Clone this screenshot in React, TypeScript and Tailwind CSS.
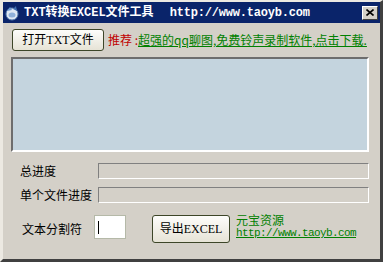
import React from "react";

const cjk = { fontFamily: '"SimSun", "Noto Sans CJK SC", "Liberation Sans", sans-serif' };
const mono = { fontFamily: '"Liberation Mono", "Noto Sans CJK SC", monospace' };
const serifMix = { fontFamily: '"Liberation Serif", "Noto Sans CJK SC", serif' };

function AppIcon() {
  return (
    <svg width="16" height="16" viewBox="0 0 16 16">
      <circle cx="8" cy="9" r="6" fill="#dfe8f4" stroke="#5b7fb0" strokeWidth="1" />
      <path d="M3 6 L6 2 L8 5 Z" fill="#6e9ad0" />
      <path d="M9 4 L12 1 L13 6 Z" fill="#3f6fb0" />
      <ellipse cx="8" cy="10" rx="3.5" ry="2.5" fill="#8fb0da" />
    </svg>
  );
}

function XpButton({ children, className }: { children: React.ReactNode; className: string }) {
  return (
    <div
      className={`flex items-center justify-center rounded-[3px] border border-[#3d4628] bg-gradient-to-b from-[#fdfdfb] to-[#e6e3d6] text-[12px] text-black ${className}`}
      style={serifMix}
    >
      {children}
    </div>
  );
}

export default function App() {
  return (
    <div className="w-[383px] h-[262px] bg-[#d4d0c8] flex flex-col border-l-[3px] border-r-[3px] border-b-[3px] border-t-[2px] border-l-[#ece9e2] border-t-[#ece9e2] border-r-[#404040] border-b-[#404040] overflow-hidden">
      {/* title bar */}
      <div className="h-[21px] bg-[#0a246a] flex items-center pl-[1px] pr-[2px]">
        <AppIcon />
        <span className="ml-[4px] text-white font-bold text-[12px] whitespace-nowrap" style={mono}>
          TXT转换EXCEL文件工具
        </span>
        <span className="ml-[16px] text-white font-bold text-[12px] tracking-[-0.2px] whitespace-nowrap" style={mono}>
          http://www.taoyb.com
        </span>
        <div className="ml-auto w-[16px] h-[14px] bg-[#d4d0c8] border border-t-white border-l-white border-r-[#404040] border-b-[#404040] flex items-center justify-center">
          <svg width="8" height="7" viewBox="0 0 8 7">
            <path d="M0.5 0.5 L7.5 6.5 M7.5 0.5 L0.5 6.5" stroke="#000" strokeWidth="1.6" />
          </svg>
        </div>
      </div>

      {/* content */}
      <div className="flex flex-col pl-[8px] pr-[8px]">
        <div className="flex items-center mt-[6px] h-[22px]">
          <XpButton className="ml-[1px] w-[92px] h-[22px]">打开TXT文件</XpButton>
          <span className="ml-[4px] text-[12px] text-[#c00000] whitespace-nowrap" style={cjk}>
            推荐 :
          </span>
          <span className="text-[12px] text-[#008000] underline whitespace-nowrap" style={cjk}>
            超强的qq聊图,免费铃声录制软件,点击下载.
          </span>
        </div>

        <div className="mt-[6px] w-[358px] h-[95px] bg-[#c4d4de] border-2 border-t-[#6d6d6d] border-l-[#6d6d6d] border-r-white border-b-white" />

        <div className="flex items-center mt-[11px] h-[16px]">
          <span className="w-[87px] pl-[9px] text-[12px] text-black" style={cjk}>总进度</span>
          <div className="w-[271px] h-[16px] border border-t-[#808080] border-l-[#808080] border-r-white border-b-white" />
        </div>
        <div className="flex items-center mt-[8px] h-[16px]">
          <span className="w-[87px] pl-[9px] text-[12px] text-black whitespace-nowrap" style={cjk}>单个文件进度</span>
          <div className="w-[271px] h-[16px] border border-t-[#808080] border-l-[#808080] border-r-white border-b-white" />
        </div>

        <div className="flex items-start mt-[12px]">
          <span className="mt-[5px] ml-[11px] w-[72px] text-[12px] text-black whitespace-nowrap" style={cjk}>文本分割符</span>
          <div className="w-[32px] h-[24px] bg-white border border-[#b5b9a8] flex items-center pl-[3px]">
            <span className="block w-[1px] h-[13px] bg-black" />
          </div>
          <XpButton className="ml-[26px] w-[78px] h-[28px]">导出EXCEL</XpButton>
          <div className="ml-[6px] flex flex-col -mt-[3px]">
            <span className="text-[12px] leading-[15px] text-[#008000]" style={cjk}>元宝资源</span>
            <span className="text-[11px] leading-[12px] text-[#008000] underline tracking-[-0.6px]" style={mono}>
              http://www.taoyb.com
            </span>
          </div>
        </div>
      </div>
    </div>
  );
}
